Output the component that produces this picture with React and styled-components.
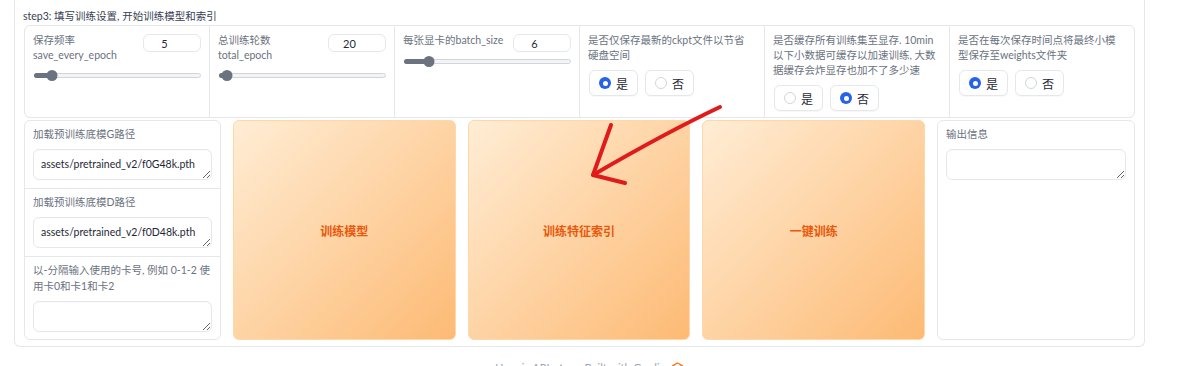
import React from "react";
import styled, { createGlobalStyle } from "styled-components";

const Global = createGlobalStyle`
  html, body { margin: 0; padding: 0; background: #fff; }
  body {
    font-family: Lato, "Noto Sans CJK SC", sans-serif;
    font-size: 10.5px;
    color: #374151;
    width: 1192px;
    height: 366px;
    overflow: hidden;
  }
  * { box-sizing: border-box; }
`;

const Page = styled.div`
  position: relative;
  width: 1192px;
  height: 366px;
`;

const Outer = styled.div`
  margin-left: 14px;
  width: 1131px;
  border: 1px solid #e5e7eb;
  border-top: none;
  border-radius: 0 0 6px 6px;
  padding: 9px 9px 6px 9px;
  background: #fff;
`;

const StepTitle = styled.div`
  font-size: 10.5px;
  line-height: 15px;
  color: #374151;
  margin-bottom: 1px;
  margin-left: -1px;
`;

const SettingsGrid = styled.div`
  display: grid;
  grid-template-columns: repeat(6, 1fr);
  gap: 1px;
  background: #e5e7eb;
  border: 1px solid #e5e7eb;
  border-radius: 6px;
  overflow: hidden;
  height: 93px;
`;

const Cell = styled.div`
  background: #fff;
  padding: 7px 10px 8px 8px;
  display: flex;
  flex-direction: column;
`;

const HeadRow = styled.div`
  display: flex;
  justify-content: space-between;
  align-items: flex-start;
  margin-right: -2px;
`;

const Label = styled.div`
  font-size: 10.5px;
  line-height: 15px;
  color: #6b7280;
`;

const NumberInput = styled.input`
  width: 58px;
  height: 18px;
  border: 1px solid #e5e7eb;
  border-radius: 6px;
  font-family: inherit;
  font-size: 11px;
  color: #1f2937;
  text-align: center;
  padding: 0 4px;
  outline: none;
  background: #fff;
  margin-top: 1px;
  flex: none;
`;

const SliderWrap = styled.div`
  position: relative;
  height: 10px;
  margin-top: ${(p) => p.$gap}px;
  margin-left: 1px;
  margin-right: -2px;
`;

const Track = styled.div`
  position: absolute;
  left: 0;
  right: 0;
  top: 2.5px;
  height: 5px;
  border-radius: 3px;
  background: #f3f4f6;
  border: 1px solid #d1d5db;
`;

const Fill = styled.div`
  position: absolute;
  left: 0;
  top: 2.5px;
  height: 5px;
  border-radius: 3px;
  background: #6b7280;
`;

const Thumb = styled.div`
  position: absolute;
  top: -0.5px;
  width: 11px;
  height: 11px;
  border-radius: 50%;
  background: #6b7280;
  transform: translateX(-5.5px);
`;

const RadioRow = styled.div`
  display: flex;
  gap: 7px;
  margin-top: ${(p) => p.$gap}px;
  margin-left: 1px;
`;

const RadioPill = styled.label`
  display: flex;
  align-items: center;
  gap: 5px;
  height: 26px;
  padding: 0 9px;
  border: 1px solid #e5e7eb;
  border-radius: 6px;
  background: #fff;
  box-shadow: 0 1px 1px rgba(0, 0, 0, 0.03);
  font-size: 12px;
  color: #1f2937;
`;

const RadioDot = styled.span`
  width: 12px;
  height: 12px;
  border-radius: 50%;
  flex: none;
  background: ${(p) => (p.$on ? "#2563eb" : "#fff")};
  border: ${(p) => (p.$on ? "none" : "1px solid #d1d5db")};
  display: flex;
  align-items: center;
  justify-content: center;
  &::after {
    content: "";
    display: ${(p) => (p.$on ? "block" : "none")};
    width: 5px;
    height: 5px;
    border-radius: 50%;
    background: #fff;
  }
`;

const BottomRow = styled.div`
  display: grid;
  grid-template-columns: 197px 1fr 1fr 1fr 198px;
  gap: 12px;
  margin-top: 2px;
  height: 220px;
`;

const Stack = styled.div`
  border: 1px solid #e5e7eb;
  border-radius: 6px;
  display: flex;
  flex-direction: column;
  background: #fff;
  overflow: hidden;
`;

const Section = styled.div`
  padding: 5px 8px 8px 8px;
  border-top: ${(p) => (p.$first ? "none" : "1px solid #e5e7eb")};
  display: flex;
  flex-direction: column;
  gap: 7px;
  flex: ${(p) => (p.$grow ? 1 : "none")};
`;

const SectionLabel = styled.div`
  font-size: 10.5px;
  line-height: 16px;
  color: #6b7280;
`;

const Area = styled.textarea`
  width: 100%;
  height: 31px;
  border: 1px solid #e5e7eb;
  border-radius: 6px;
  padding: 7px 7px;
  font-family: inherit;
  font-size: 10.5px;
  line-height: 15px;
  color: #1f2937;
  resize: vertical;
  outline: none;
  overflow: hidden;
  white-space: nowrap;
  background: #fff;
  box-shadow: inset 0 1px 1px rgba(0, 0, 0, 0.02);
`;

const BigButton = styled.button`
  border: 1px solid #fed7aa;
  border-radius: 6px;
  background: linear-gradient(to bottom right, #ffedd5, #fdba74);
  color: #ea580c;
  font-family: "Noto Sans CJK SC", sans-serif;
  font-size: 12px;
  font-weight: 700;
  cursor: pointer;
  padding: 0;
`;

const Footer = styled.div`
  display: flex;
  justify-content: center;
  align-items: center;
  gap: 8px;
  margin-top: 13px;
  font-size: 11px;
  line-height: 15px;
  color: #9ca3af;
  padding-right: 14px;
`;

const FootItem = styled.span`
  display: inline-flex;
  align-items: center;
  gap: 6px;
`;

const ArrowSvg = styled.svg`
  position: absolute;
  left: 0;
  top: 0;
  pointer-events: none;
`;

function Slider({ pct, gap }) {
  return (
    <SliderWrap $gap={gap}>
      <Track />
      <Fill style={{ width: `calc(5px + (100% - 10px) * ${pct})` }} />
      <Thumb style={{ left: `calc(5px + (100% - 10px) * ${pct})` }} />
    </SliderWrap>
  );
}

function Radios({ value, gap }) {
  return (
    <RadioRow $gap={gap}>
      {["是", "否"].map((o) => (
        <RadioPill key={o}>
          <RadioDot $on={value === o} />
          {o}
        </RadioPill>
      ))}
    </RadioRow>
  );
}

const numbers = [
  { cn: "保存频率", en: "save_every_epoch", v: 5, min: 1, max: 50, gap: 7 },
  { cn: "总训练轮数", en: "total_epoch", v: 20, min: 1, max: 1000, gap: 7 },
  { cn: "每张显卡的batch_size", en: null, v: 6, min: 1, max: 40, gap: 4 },
];

const radios = [
  { text: "是否仅保存最新的ckpt文件以节省硬盘空间", v: "是" },
  { text: "是否缓存所有训练集至显存. 10min以下小数据可缓存以加速训练, 大数据缓存会炸显存也加不了多少速", v: "否" },
  { text: "是否在每次保存时间点将最终小模型保存至weights文件夹", v: "是" },
];

export default function App() {
  return (
    <Page>
      <Global />
      <Outer>
        <StepTitle>step3: 填写训练设置, 开始训练模型和索引</StepTitle>
        <SettingsGrid>
          {numbers.map((n) => (
            <Cell key={n.cn}>
              <HeadRow>
                <div>
                  <Label>{n.cn}</Label>
                  {n.en && <Label>{n.en}</Label>}
                </div>
                <NumberInput type="number" defaultValue={n.v} />
              </HeadRow>
              <Slider pct={(n.v - n.min) / (n.max - n.min)} gap={n.gap} />
            </Cell>
          ))}
          {radios.map((r) => (
            <Cell key={r.text}>
              <Label>{r.text}</Label>
              <Radios value={r.v} gap={7} />
            </Cell>
          ))}
        </SettingsGrid>
        <BottomRow>
          <Stack>
            <Section $first>
              <SectionLabel>加载预训练底模G路径</SectionLabel>
              <Area readOnly wrap="off" value="assets/pretrained_v2/f0G48k.pth" />
            </Section>
            <Section>
              <SectionLabel>加载预训练底模D路径</SectionLabel>
              <Area readOnly wrap="off" value="assets/pretrained_v2/f0D48k.pth" />
            </Section>
            <Section $grow>
              <SectionLabel>以-分隔输入使用的卡号, 例如 0-1-2 使用卡0和卡1和卡2</SectionLabel>
              <Area readOnly value="" />
            </Section>
          </Stack>
          <BigButton>训练模型</BigButton>
          <BigButton>训练特征索引</BigButton>
          <BigButton>一键训练</BigButton>
          <Stack>
            <Section $first $grow>
              <SectionLabel>输出信息</SectionLabel>
              <Area readOnly value="" />
            </Section>
          </Stack>
        </BottomRow>
      </Outer>
      <Footer>
        <FootItem>
          Use via API
          <svg width="10" height="10" viewBox="0 0 10 10">
            <path d="M3 9 L5 1 L7 9 Z" fill="#374151" />
          </svg>
        </FootItem>
        <span>·</span>
        <FootItem>
          Built with Gradio
          <svg width="11" height="11" viewBox="0 0 11 11">
            <path d="M5.5 1 L10 3.5 L5.5 6 L1 3.5 Z" fill="none" stroke="#f97316" strokeWidth="1.4" />
            <path d="M1 6 L5.5 8.5 L10 6" fill="none" stroke="#f97316" strokeWidth="1.4" />
          </svg>
        </FootItem>
      </Footer>
      <ArrowSvg width="1192" height="366" viewBox="0 0 1192 366">
        <g fill="none" stroke="#e01b1b" strokeWidth="4" strokeLinecap="round" strokeLinejoin="round">
          <path d="M720 107 Q 665 133 593 175" />
          <path d="M611 125 L593 175 L625 183" />
        </g>
      </ArrowSvg>
    </Page>
  );
}
